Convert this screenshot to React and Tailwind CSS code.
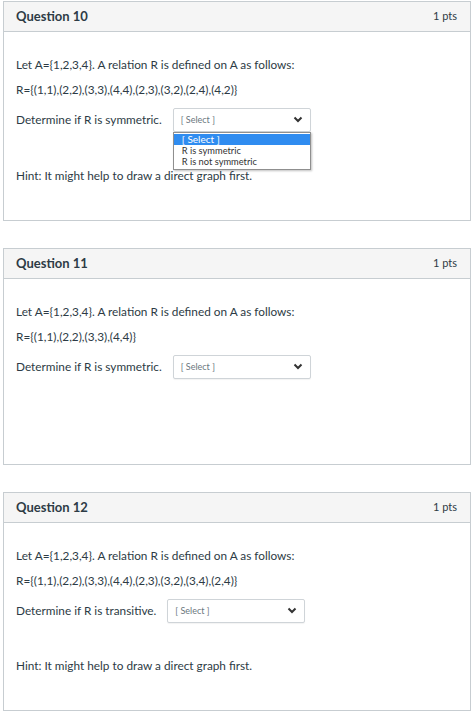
import React from "react";

function Chevron() {
  return (
    <svg width="10" height="7" viewBox="0 0 10 7" className="text-[#333]">
      <path d="M1.5 1.5 L5 5 L8.5 1.5" fill="none" stroke="currentColor" strokeWidth="2" />
    </svg>
  );
}

function SelectBox({ open }) {
  return (
    <div className="relative ml-[11px]">
      <div className="flex h-[24px] w-[138px] items-center justify-between rounded-[2px] border border-[#cfd4d8] bg-white pl-[7px] pr-[7px] shadow-[0_1px_1px_rgba(0,0,0,0.05)]">
        <span className="text-[9px] text-[#6b7780]">[ Select ]</span>
        <Chevron />
      </div>
      {open && (
        <div className="absolute left-0 top-[24px] z-10 w-[138px] border border-[#8f8f8f] bg-white py-[1px] text-[9.3px] leading-[11px] text-[#333] shadow-[1px_1px_2px_rgba(0,0,0,0.25)]">
          <div className="bg-[#2f8cf0] pl-[8px] text-[10px] text-white">[ Select ]</div>
          <div className="pl-[8px]">R is symmetric</div>
          <div className="pl-[8px] pb-[1px]">R is not symmetric</div>
        </div>
      )}
    </div>
  );
}

function Question({ num, relation, prop, open, hint, height, hintGap }) {
  return (
    <div
      className="mx-[3px] flex flex-col border border-[#c7cdd1] bg-white"
      style={{ height }}
    >
      <div className="flex h-[30px] items-center justify-between border-b border-[#c7cdd1] bg-[#f5f5f5] pl-[12px] pr-[13px]">
        <span className="text-[13px] font-bold text-[#2d3b45]">Question {num}</span>
        <span className="text-[11px] text-[#2d3b45]">1 pts</span>
      </div>
      <div className="px-[12px] pt-[20px] text-[11.8px] leading-[25px] text-[#2d3b45]">
        <p>Let A={"{"}1,2,3,4{"}"}. A relation R is defined on A as follows:</p>
        <p>R={"{"}{relation}{"}"}</p>
        <div className="mt-[5px] flex items-center">
          <span>Determine if R is {prop}.</span>
          <SelectBox open={open} />
        </div>
        {hint && (
          <p style={{ marginTop: hintGap }}>Hint: It might help to draw a direct graph first.</p>
        )}
      </div>
    </div>
  );
}

export default function App() {
  return (
    <div className="min-h-[713px] w-[474px] bg-white pt-[1px] font-['Lato','Noto_Sans',sans-serif]">
      <Question
        num={10}
        relation="(1,1),(2,2),(3,3),(4,4),(2,3),(3,2),(2,4),(4,2)"
        prop="symmetric"
        open
        hint
        height={220}
        hintGap={31}
      />
      <div className="h-[27px]" />
      <Question
        num={11}
        relation="(1,1),(2,2),(3,3),(4,4)"
        prop="symmetric"
        height={217}
      />
      <div className="h-[27px]" />
      <Question
        num={12}
        relation="(1,1),(2,2),(3,3),(4,4),(2,3),(3,2),(3,4),(2,4)"
        prop="transitive"
        hint
        height={219}
        hintGap={30}
      />
    </div>
  );
}
